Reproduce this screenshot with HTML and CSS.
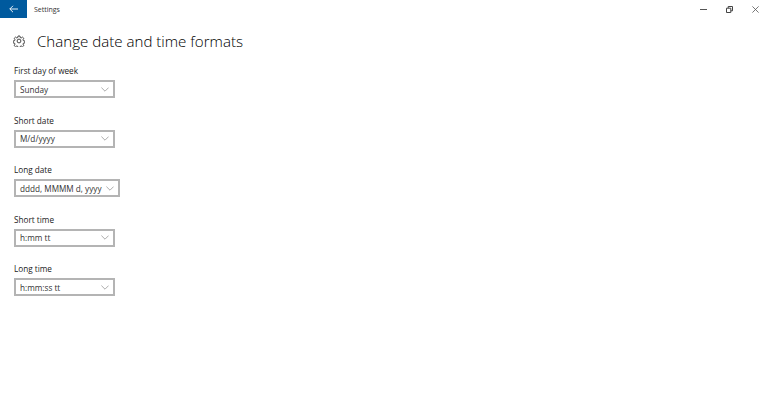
FILE: index.html
```html
<!DOCTYPE html>
<html lang="en">

<head>
  <meta charset="UTF-8" />
  <meta name="viewport" content="width=device-width, initial-scale=1.0" />
  <title>Settings</title>
  <link rel="stylesheet" href="styles.css">
</head>

<body>
  <div class="titlebar">
    <button class="back">
      <svg width="9" height="8" viewBox="0 0 9 8"><path d="M4 .8 .8 4 4 7.2M.8 4H9" fill="none" stroke="#fff" stroke-width=".9" /></svg>
    </button>
    <span class="app-name">Settings</span>
    <div class="window-controls">
      <svg width="7" height="7" viewBox="0 0 7 7"><path d="M0 3.5H7" stroke="#555" stroke-width="1" /></svg>
      <svg width="7" height="7" viewBox="0 0 7 7"><path d="M.5 2.2H4.8V6.5H.5ZM2.2 2.2V.5H6.5V4.8H4.8" fill="none" stroke="#444" stroke-width="1" /></svg>
      <svg width="7" height="7" viewBox="0 0 7 7"><path d="M.4 .4 6.6 6.6M6.6 .4 .4 6.6" stroke="#555" stroke-width=".8" /></svg>
    </div>
  </div>

  <main class="content">
    <div class="page-head">
      <svg class="gear" width="12" height="12" viewBox="0 0 24 24">
        <circle cx="12" cy="12" r="3.8" fill="none" stroke="#333" stroke-width="1.8" />
        <path d="M10 1.5h4l.6 3.2 2 .9 2.8-1.8 2.8 2.8-1.8 2.8.9 2 3.2.6v4l-3.2.6-.9 2 1.8 2.8-2.8 2.8-2.8-1.8-2 .9-.6 3.2h-4l-.6-3.2-2-.9-2.8 1.8-2.8-2.8 1.8-2.8-.9-2-3.2-.6v-4l3.2-.6.9-2-1.8-2.8 2.8-2.8 2.8 1.8 2-.9z" transform="translate(.6 .6) scale(.95)" fill="none" stroke="#333" stroke-width="1.9" />
      </svg>
      <h1>Change date and time formats</h1>
    </div>

    <div class="field">
      <label>First day of week</label>
      <div class="combo"><span>Sunday</span><svg class="chevron" width="8" height="5" viewBox="0 0 8 5"><path d="M.4 .6 4 4.2 7.6 .6" fill="none" stroke="#888" stroke-width=".7" /></svg></div>
    </div>
    <div class="field">
      <label>Short date</label>
      <div class="combo"><span>M/d/yyyy</span><svg class="chevron" width="8" height="5" viewBox="0 0 8 5"><path d="M.4 .6 4 4.2 7.6 .6" fill="none" stroke="#888" stroke-width=".7" /></svg></div>
    </div>
    <div class="field">
      <label>Long date</label>
      <div class="combo wide"><span>dddd, MMMM d, yyyy</span><svg class="chevron" width="8" height="5" viewBox="0 0 8 5"><path d="M.4 .6 4 4.2 7.6 .6" fill="none" stroke="#888" stroke-width=".7" /></svg></div>
    </div>
    <div class="field">
      <label>Short time</label>
      <div class="combo"><span>h:mm tt</span><svg class="chevron" width="8" height="5" viewBox="0 0 8 5"><path d="M.4 .6 4 4.2 7.6 .6" fill="none" stroke="#888" stroke-width=".7" /></svg></div>
    </div>
    <div class="field">
      <label>Long time</label>
      <div class="combo"><span>h:mm:ss tt</span><svg class="chevron" width="8" height="5" viewBox="0 0 8 5"><path d="M.4 .6 4 4.2 7.6 .6" fill="none" stroke="#888" stroke-width=".7" /></svg></div>
    </div>
  </main>
</body>

</html>
```

FILE: styles.css
```css
* {
  margin: 0;
  padding: 0;
  box-sizing: border-box;
}

body {
  background: #fff;
  color: #222;
  font-family: "Open Sans", "Liberation Sans", sans-serif;
  overflow: hidden;
}

.titlebar {
  height: 18px;
  display: flex;
  align-items: center;
}

.back {
  width: 27px;
  height: 18px;
  border: none;
  background: #005a9e;
  display: flex;
  align-items: center;
  justify-content: center;
}

.app-name {
  margin-left: 7px;
  font-size: 7px;
  color: #333;
}

.window-controls {
  margin-left: auto;
  padding-right: 9px;
  display: flex;
  align-items: center;
  gap: 19px;
}

.content {
  padding: 14px 14px 0 14px;
}

.page-head {
  display: flex;
  align-items: center;
  gap: 12px;
  height: 18px;
  margin-bottom: 15px;
}

.gear {
  margin-left: -1px;
}

.page-head h1 {
  font-size: 15.1px;
  font-weight: 300;
  color: #000;
}

.field {
  margin-bottom: 16.5px;
}

.field label {
  display: block;
  height: 15px;
  font-size: 8.2px;
  line-height: 12px;
  color: #222;
}

.combo {
  width: 101px;
  height: 18px;
  border: 2px solid #b4b4b4;
  padding: 0 4px;
  display: flex;
  align-items: center;
  justify-content: space-between;
  font-size: 8.2px;
  color: #333;
}

.combo.wide {
  width: 106px;
}
```
